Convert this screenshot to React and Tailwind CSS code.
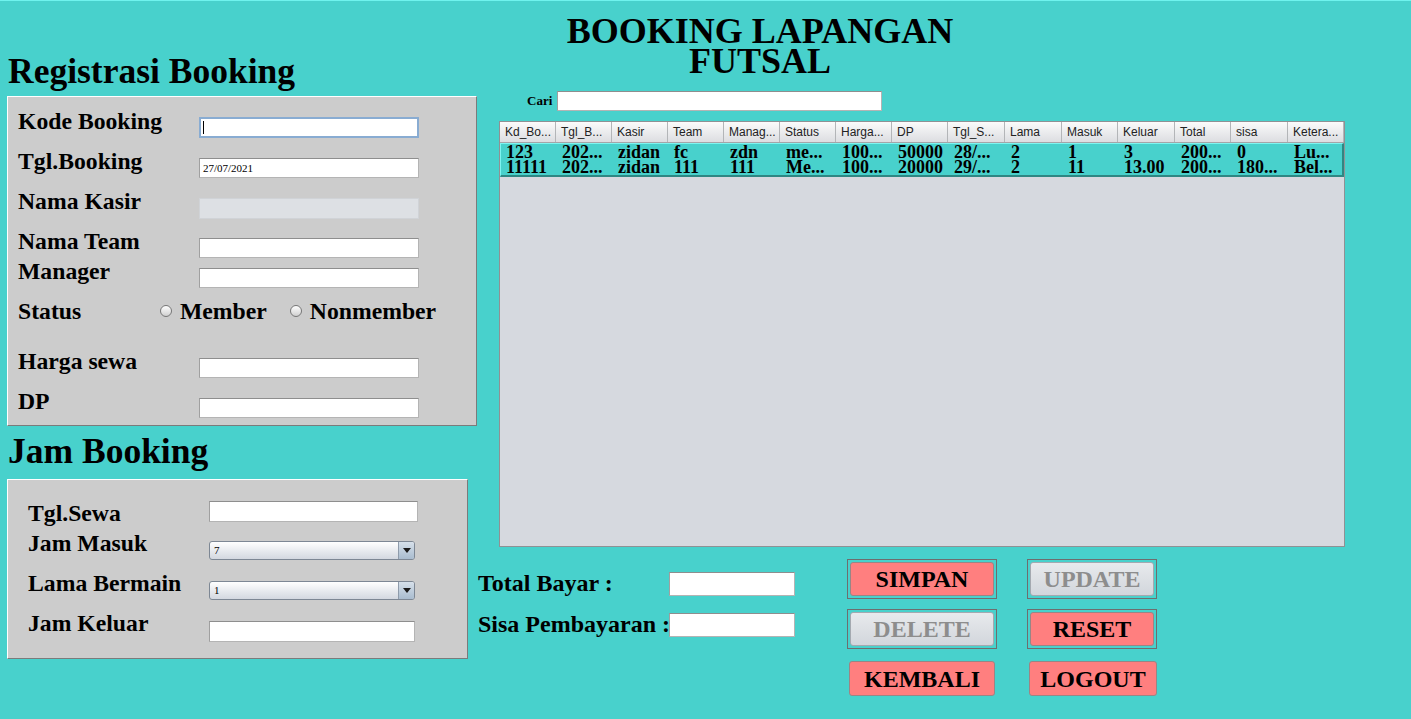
import React from 'react';

const COLS = [
  { w: 'w-[56px]', head: 'Kd_Bo...', r1: '123', r2: '11111' },
  { w: 'w-[56px]', head: 'Tgl_B...', r1: '202...', r2: '202...' },
  { w: 'w-[56px]', head: 'Kasir', r1: 'zidan', r2: 'zidan' },
  { w: 'w-[56px]', head: 'Team', r1: 'fc', r2: '111' },
  { w: 'w-[56px]', head: 'Manag...', r1: 'zdn', r2: '111' },
  { w: 'w-[56px]', head: 'Status', r1: 'me...', r2: 'Me...' },
  { w: 'w-[56px]', head: 'Harga...', r1: '100...', r2: '100...' },
  { w: 'w-[56px]', head: 'DP', r1: '50000', r2: '20000' },
  { w: 'w-[57px]', head: 'Tgl_S...', r1: '28/...', r2: '29/...' },
  { w: 'w-[57px]', head: 'Lama', r1: '2', r2: '2' },
  { w: 'w-[56px]', head: 'Masuk', r1: '1', r2: '11' },
  { w: 'w-[57px]', head: 'Keluar', r1: '3', r2: '13.00' },
  { w: 'w-[56px]', head: 'Total', r1: '200...', r2: '200...' },
  { w: 'w-[57px]', head: 'sisa', r1: '0', r2: '180...' },
  { w: 'w-[56px]', head: 'Ketera...', r1: 'Lu...', r2: 'Bel...' },
];

const fieldCls = 'bg-white border border-[#b4b4b4] border-t-[#8e8e8e] border-l-[#a0a0a0]';

const Field = ({ w = 'w-[220px]', h = 'h-[20px]', className = '', children }) => (
  <div className={`${w} ${h} ${fieldCls} ${className}`}>{children}</div>
);

const Combo = ({ value }) => (
  <div className="w-[206px] h-[19px] mt-[10px] flex rounded-[3px] border border-[#7d8794] bg-gradient-to-b from-white to-[#d3d8e0] overflow-hidden">
    <div className="flex-1 pl-[4px] text-[11px] leading-[17px] font-normal font-['Liberation_Serif',serif]">{value}</div>
    <div className="w-[16px] border-l border-[#8e9bab] bg-gradient-to-b from-[#d6e0ea] to-[#a9bccf] flex items-center justify-center">
      <svg width="8" height="5" viewBox="0 0 8 5"><polygon points="0,0 8,0 4,5" fill="#1a1a1a" /></svg>
    </div>
  </div>
);

const Radio = ({ label }) => (
  <div className="flex items-center h-[24px]">
    <div className="w-[12px] h-[12px] rounded-full border border-[#777] bg-gradient-to-b from-white to-[#d0d0d0]" />
    <span className="ml-[8px] whitespace-nowrap">{label}</span>
  </div>
);

const Btn = ({ label, disabled, w }) => (
  <div
    className={`${w} h-full rounded-[3px] border flex items-center justify-center text-[24px] font-bold ${
      disabled
        ? 'border-[#a4a9b0] bg-gradient-to-b from-[#e8eaed] to-[#d2d6dc] text-[#8d8d8d]'
        : 'border-[#9a8585] bg-[#ff7f7f] text-black'
    }`}
  >
    {label}
  </div>
);

const Framed = ({ children, w }) => (
  <div className={`${w} h-[40px] border border-[#6e6e6e] p-[2px]`}>{children}</div>
);

export default function App() {
  return (
    <div className="w-[1411px] h-[719px] bg-[#48d1cc] border-t border-[#6ff3ee] flex text-black font-['Liberation_Serif','Times_New_Roman',serif] overflow-hidden">
      {/* left side */}
      <div className="w-[478px] shrink-0 pt-[52px]">
        <h2 className="ml-[8px] text-[35.5px] leading-[36px] font-bold whitespace-nowrap">Registrasi Booking</h2>
        <div className="ml-[7px] mt-[7px] w-[470px] h-[330px] bg-[#cccccc] border border-t-white border-l-white border-r-[#7b7b7b] border-b-[#7b7b7b] pt-[12px] pl-[10px] text-[23.7px] leading-[24px] font-bold">
          <div className="flex h-[40px]">
            <div className="w-[181px]">Kode Booking</div>
            <div className="w-[220px] h-[21px] mt-[8px] bg-white border-2 border-[#89acd2] relative">
              <div className="absolute left-[2px] top-[2px] w-px h-[13px] bg-black" />
            </div>
          </div>
          <div className="flex h-[40px]">
            <div className="w-[181px]">Tgl.Booking</div>
            <Field className="mt-[9px]">
              <div className="pl-[3px] text-[11px] leading-[18px] font-normal">27/07/2021</div>
            </Field>
          </div>
          <div className="flex h-[40px]">
            <div className="w-[181px]">Nama Kasir</div>
            <div className="w-[220px] h-[21px] mt-[9px] bg-[#dde0e4] border border-[#d0d3d7]" />
          </div>
          <div className="flex h-[30px]">
            <div className="w-[181px]">Nama Team</div>
            <Field className="mt-[9px]" />
          </div>
          <div className="flex h-[40px]">
            <div className="w-[181px]">Manager</div>
            <Field className="mt-[9px]" />
          </div>
          <div className="flex items-start h-[50px]">
            <div className="w-[142px]">Status</div>
            <Radio label="Member" />
            <div className="ml-[23px]">
              <Radio label="Nonmember" />
            </div>
          </div>
          <div className="flex h-[40px]">
            <div className="w-[181px]">Harga sewa</div>
            <Field className="mt-[9px]" />
          </div>
          <div className="flex">
            <div className="w-[181px]">DP</div>
            <Field className="mt-[9px]" />
          </div>
        </div>

        <h2 className="ml-[8px] mt-[7px] text-[35.5px] leading-[36px] font-bold">Jam Booking</h2>
        <div className="ml-[7px] mt-[10px] w-[461px] h-[180px] bg-[#cccccc] border border-t-white border-l-white border-r-[#7b7b7b] border-b-[#7b7b7b] pt-[21px] pl-[20px] text-[23.7px] leading-[24px] font-bold">
          <div className="flex h-[30px]">
            <div className="w-[181px]">Tgl.Sewa</div>
            <Field w="w-[209px]" h="h-[21px]" />
          </div>
          <div className="flex h-[40px]">
            <div className="w-[181px]">Jam Masuk</div>
            <Combo value="7" />
          </div>
          <div className="flex h-[40px]">
            <div className="w-[181px]">Lama Bermain</div>
            <Combo value="1" />
          </div>
          <div className="flex">
            <div className="w-[181px]">Jam Keluar</div>
            <Field w="w-[206px]" h="h-[21px]" className="mt-[10px]" />
          </div>
        </div>
      </div>

      {/* right side */}
      <div className="flex-1">
        <h1 className="ml-[82px] mt-[15px] w-[400px] text-center text-[36px] leading-[30px] font-bold">
          BOOKING LAPANGAN
          <br />
          FUTSAL
        </h1>

        <div className="mt-[15px] ml-[49px] flex items-center h-[20px]">
          <span className="text-[13px] font-bold">Cari</span>
          <Field w="w-[325px]" className="ml-[5px]" />
        </div>

        <div className="mt-[10px] ml-[21px] w-[846px] h-[426px] border border-[#8f9194] bg-[#d6d9df] flex flex-col">
          <div className="flex h-[21px] border-b border-[#a3a5a8] bg-gradient-to-b from-[#fbfbfb] to-[#dcdde1] font-['Liberation_Sans',Arial,sans-serif] text-[12px] leading-[20px] text-[#222]">
            {COLS.map((c, i) => (
              <div key={i} className={`${c.w} shrink-0 pl-[5px] border-r border-[#b3b5b8] whitespace-nowrap overflow-hidden`}>
                {c.head}
              </div>
            ))}
          </div>
          <div className="h-[34px] pt-[1px] bg-[#48d1cc] border border-[#7df5f1] border-b-2 border-b-[#2f8783] border-r-2 border-r-[#2f8783] text-[18px] leading-[15px] font-bold">
            {['r1', 'r2'].map((r) => (
              <div key={r} className="flex h-[15px]">
                {COLS.map((c, i) => (
                  <div key={i} className={`${c.w} shrink-0 pl-[5px] whitespace-nowrap`}>
                    {c[r]}
                  </div>
                ))}
              </div>
            ))}
          </div>
        </div>

        <div className="mt-[12px] flex">
          <div className="w-[369px] pt-[12px] text-[24px] leading-[24px] font-bold">
            <div className="flex">
              <div className="w-[191px] shrink-0 whitespace-nowrap">Total Bayar :</div>
              <Field w="w-[126px]" h="h-[24px]" className="mt-[1px]" />
            </div>
            <div className="flex mt-[16px]">
              <div className="w-[191px] shrink-0 whitespace-nowrap">Sisa Pembayaran :</div>
              <Field w="w-[126px]" h="h-[24px]" className="mt-[1px]" />
            </div>
          </div>

          <div className="flex flex-col">
            <div className="flex gap-[30px]">
              <Framed w="w-[150px]"><Btn label="SIMPAN" w="w-full" /></Framed>
              <Framed w="w-[130px]"><Btn label="UPDATE" disabled w="w-full" /></Framed>
            </div>
            <div className="flex gap-[30px] mt-[10px]">
              <Framed w="w-[150px]"><Btn label="DELETE" disabled w="w-full" /></Framed>
              <Framed w="w-[130px]"><Btn label="RESET" w="w-full" /></Framed>
            </div>
            <div className="flex mt-[12px] h-[35px] pl-[2px]">
              <Btn label="KEMBALI" w="w-[146px]" />
              <div className="ml-[34px] h-full">
                <Btn label="LOGOUT" w="w-[128px]" />
              </div>
            </div>
          </div>
        </div>
      </div>
    </div>
  );
}
